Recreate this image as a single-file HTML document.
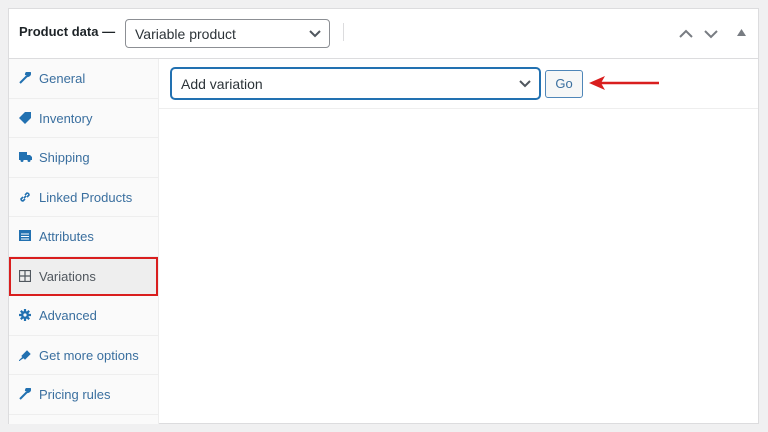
<!DOCTYPE html>
<html><head><style>
*{box-sizing:border-box;margin:0;padding:0}
body{width:768px;height:432px;background:#f0f0f1;font-family:"Liberation Sans",sans-serif;position:relative;overflow:hidden}
.panel{position:absolute;left:8px;top:8px;width:751px;height:416px;background:#fff;border:1px solid #dcdcde}
.hdr{position:absolute;left:0;top:0;width:100%;height:50px;border-bottom:1px solid #dcdcde}
.title{position:absolute;left:10px;top:15px;font-size:13px;font-weight:bold;color:#1d2327}
.sel{position:absolute;border:1px solid #8c8f94;border-radius:4px;background:#fff;font-size:14px;color:#2c3338}
.side{position:absolute;left:0;top:50px;width:150px;height:365px;background:#fafafa;border-right:1px solid #eee}
.item{height:39.5px;border-bottom:1px solid #eee;color:#3a6f9f;font-size:13px;line-height:39px;padding-left:30px;position:relative}
.item svg{position:absolute;left:10px;top:13px}
.tool{position:absolute;left:150px;top:50px;right:0;height:50px;border-bottom:1px solid #eee}
.chev{position:absolute;top:20px}
</style></head><body>
<div class="panel">
 <div class="hdr">
  <div class="title">Product data —</div>
  <div class="sel" style="left:116px;top:10px;width:205px;height:29px;padding:6px 9px">Variable product
   <svg style="position:absolute;right:8px;top:10px" width="12" height="8" viewBox="0 0 12 8"><path d="M1 1l5 5 5-5" stroke="#50575e" stroke-width="2" fill="none"/></svg></div>
  <div style="position:absolute;left:334px;top:14px;width:1px;height:18px;background:#dcdcde"></div>
  <svg class="chev" style="left:670px" width="14" height="10" viewBox="0 0 14 10"><path d="M1 8l6-6 6 6" stroke="#787c82" stroke-width="2" fill="none"/></svg>
  <svg class="chev" style="left:695px" width="14" height="10" viewBox="0 0 14 10"><path d="M1 2l6 6 6-6" stroke="#787c82" stroke-width="2" fill="none"/></svg>
  <svg class="chev" style="left:728px;top:20px" width="9" height="7" viewBox="0 0 9 7"><path d="M0 7L4.5 0 9 7z" fill="#787c82"/></svg>
 </div>
 <div class="side">
  <div class="item"><svg width="12" height="12" viewBox="0 0 12 12"><path d="M1 11l5-5M6 6l2-2a2.5 2.5 0 0 0 3-3L9 3 8 2l2-2a2.5 2.5 0 0 0-3 3" stroke="#2271b1" stroke-width="2" fill="none"/></svg>General</div>
  <div class="item"><svg width="12" height="12" viewBox="0 0 12 12"><path d="M6 0h6v6L6 12 0 6z" fill="#2271b1"/></svg>Inventory</div>
  <div class="item"><svg width="13" height="11" viewBox="0 0 13 11"><path d="M0 1h8v8H0zM8 4h3l2 2v3H8z" fill="#2271b1"/><circle cx="3" cy="9.5" r="1.5" fill="#2271b1"/><circle cx="10" cy="9.5" r="1.5" fill="#2271b1"/></svg>Shipping</div>
  <div class="item"><svg width="12" height="12" viewBox="0 0 12 12"><path d="M5 7l2-2M4 6L2 8a2 2 0 0 0 2 2l2-2M8 6l2-2a2 2 0 0 0-2-2L6 4" stroke="#2271b1" stroke-width="1.6" fill="none"/></svg>Linked Products</div>
  <div class="item"><svg width="12" height="11" viewBox="0 0 12 11"><rect x="0" y="0" width="12" height="11" fill="#2271b1"/><path d="M2 4h8M2 6.5h8M2 9h8" stroke="#fff" stroke-width="1"/></svg>Attributes</div>
  <div class="item" style="background:#eee;color:#50575e;outline:2px solid #d91e1e;outline-offset:-2px"><svg width="12" height="12" viewBox="0 0 12 12"><path d="M.5.5h11v11H.5zM6 .5v11M.5 6h11" stroke="#50575e" stroke-width="1.2" fill="none"/></svg>Variations</div>
  <div class="item"><svg width="12" height="12" viewBox="0 0 12 12"><path d="M6 0v12M0 6h12M1.8 1.8l8.4 8.4M10.2 1.8l-8.4 8.4" stroke="#2271b1" stroke-width="2.2"/><circle cx="6" cy="6" r="4" fill="#2271b1"/><circle cx="6" cy="6" r="1.6" fill="#fafafa"/></svg>Advanced</div>
  <div class="item"><svg width="12" height="12" viewBox="0 0 12 12"><path d="M0 12l4-4 2 2 5-5-3-3-5 5 2 2" fill="#2271b1" stroke="#2271b1"/></svg>Get more options</div>
  <div class="item"><svg width="12" height="12" viewBox="0 0 12 12"><path d="M1 11l5-5M6 6l2-2a2.5 2.5 0 0 0 3-3L9 3 8 2l2-2a2.5 2.5 0 0 0-3 3" stroke="#2271b1" stroke-width="2" fill="none"/></svg>Pricing rules</div>
 </div>
 <div class="tool">
  <div class="sel" style="left:12px;top:9px;width:369px;height:31px;padding:7px 9px;border-color:#2271b1;box-shadow:0 0 0 1px #2271b1">Add variation
   <svg style="position:absolute;right:8px;top:11px" width="12" height="8" viewBox="0 0 12 8"><path d="M1 1l5 5 5-5" stroke="#50575e" stroke-width="2" fill="none"/></svg></div>
  <div style="position:absolute;left:386px;top:11px;width:38px;height:28px;border:1px solid #4f86b8;border-radius:3px;background:#f6f7f7;color:#3a6f9f;font-size:13px;text-align:center;line-height:26px">Go</div>
  <svg style="position:absolute;left:428px;top:15px" width="75" height="18" viewBox="0 0 75 18"><path d="M14 9h58" stroke="#d91e1e" stroke-width="2.5"/><path d="M2 9l16-7-4 7 4 7z" fill="#d91e1e"/></svg>
 </div>
</div>
</body></html>
